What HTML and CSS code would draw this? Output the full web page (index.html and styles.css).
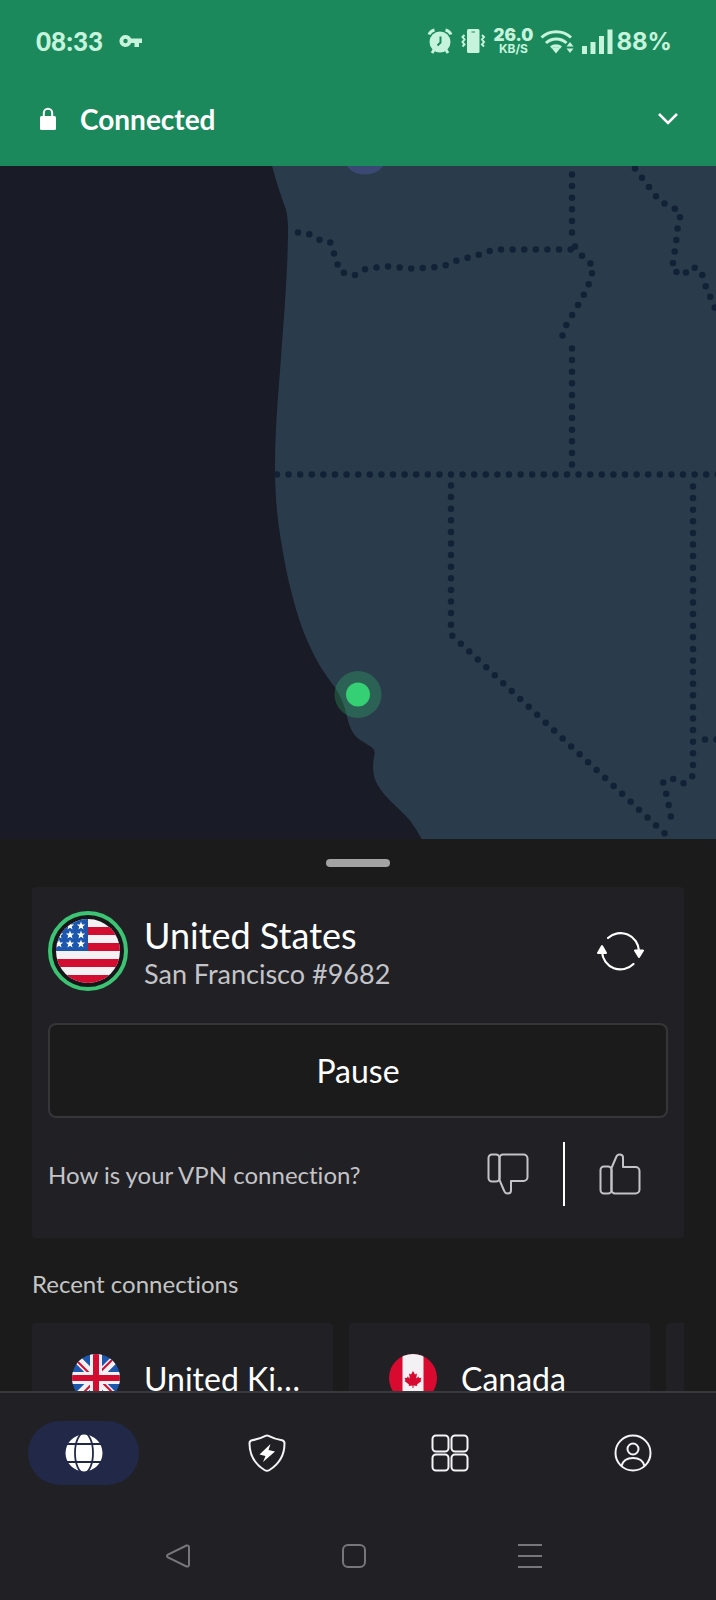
FILE: index.html
```html
<!DOCTYPE html>
<html lang="en">
<head>
  <meta charset="UTF-8">
  <meta name="viewport" content="width=device-width, initial-scale=1">
  <title>VPN - Connected</title>
  <link rel="stylesheet" href="styles.css">
</head>
<body>

  <div class="status-bar">
    <span class="clock">08:33</span>
    <svg class="key" width="24" height="14" viewBox="0 0 24 14">
      <path fill-rule="evenodd" d="M6.500 1a6 6 0 1 0 5.600 8H15.500v4h4.500v-4h3V4.500H12.100A6 6 0 0 0 6.500 1zm0 3.800a2.200 2.200 0 1 1 0 4.400 2.200 2.200 0 0 1 0-4.400z"/>
    </svg>

    <div class="status-icons">
      <svg width="26" height="26" viewBox="0 0 26 26">
        <circle cx="13" cy="14" r="10.500"/>
        <path class="line" d="M2 6.500Q3.500 3 7.500 2M24 6.500Q22.500 3 18.500 2M7 22l-2 3M19 22l2 3"/>
        <path class="cut" d="M13.500 8.500v6l-3 3"/>
      </svg>
      <svg width="26" height="26" viewBox="0 0 26 26">
        <rect x="7" y="1" width="12.500" height="24" rx="1.500"/>
        <path class="thin" d="M4.500 7l-2 2 2 2.500-2 2.500 2 2.500-2 2M22 7l2 2-2 2.500 2 2.500-2 2.500 2 2"/>
        <path class="cut thin-cut" d="M11.500 4h3.500"/>
      </svg>
      <div class="speed"><b>26.0</b><span>KB/S</span></div>
      <svg width="34" height="26" viewBox="0 0 34 26">
        <path class="arc" d="M1.500 9.500a21.500 21.500 0 0 1 29.500 0M6 15a15 15 0 0 1 20.500 0M11 19.500a8 8 0 0 1 10 0"/>
        <path d="M12 20.500q4-3 8 0l-4 5zM30 14l3.500 4.500h-7zM30 25l3.500-4.500h-7z"/>
      </svg>
      <svg width="32" height="26" viewBox="0 0 32 26">
        <path d="M1 18h5v8H1zM9.500 14h5v12h-5zM18 8h5v18h-5zM26.500 1.500h5V26h-5z"/>
      </svg>
      <span class="battery">88%</span>
    </div>
  </div>

  <button class="connection-bar">
    <svg width="16" height="24" viewBox="0 0 16 24">
      <rect x="0" y="9" width="16" height="14" rx="1.500" fill="#fff"/>
      <path d="M3.800 10V6a4.200 4.200 0 0 1 8.400 0v4" fill="none" stroke="#fff" stroke-width="2"/>
    </svg>
    <span>Connected</span>
    <svg class="chevron" width="20" height="12" viewBox="0 0 20 12">
      <path d="M1 1l9 9 9-9" fill="none" stroke="#fff" stroke-width="2.500"/>
    </svg>
  </button>

  <div class="map">
    <svg viewBox="0 166 716 674" preserveAspectRatio="xMidYMid slice">
      <path class="land" d="M272 166Q277 186 286 210Q288 218 288 230C288 262 285 306 282 343C280 378 275 420 275 468C275 500 278 525 282 547C288 584 298 622 310 647C318 665 326 676 335 688Q344 702 347 717Q350 732 358 739L372 748Q376 751 374 757Q371 775 378 786C386 800 400 809 410 821Q416 829 422 840H716V166z"/>
      <ellipse class="lake" cx="365" cy="162" rx="19" ry="13"/>

      <!-- state borders -->
      <g class="borders" stroke-width="6.500" stroke-dasharray="0 11.600">
        <path d="M298 233L308 234L318 240L330 242L340 272L354 276L364 270L376 268L389 267L412 269L433 268L443 267L454 262L480 255L494 250H573"/>
        <path d="M572 175V240"/>
        <path d="M575 247L584 259L594 267L588 287L583 297L563 331L562 342"/>
        <path d="M572 349V470"/>
        <path d="M277 475H720"/>
        <path d="M451 486V635L669 838"/>
        <path d="M693 487V776L684 784L675 779L663 782L667 797L672 823"/>
        <path d="M705 740H720"/>
        <path d="M635 169L660 202L673 208L681 214L678 225L676 243L672 270L683 276L692 267L701 271L705 285L716 311"/>
      </g>

      <circle class="pin-halo" cx="358" cy="695" r="23.500"/>
      <circle class="pin" cx="358" cy="695" r="12"/>
    </svg>
  </div>

  <main class="sheet">
    <div class="handle"></div>

    <section class="card">
      <div class="server">
        <div class="flag-ring">
          <svg width="64" height="64" viewBox="0 0 64 64">
            <clipPath id="us"><circle cx="32" cy="32" r="32"/></clipPath>
            <g clip-path="url(#us)">
              <rect width="64" height="64" fill="#f3f1f4"/>
              <path fill="#d30d30" d="M0 8h64v8H0zM0 24h64v8H0zM0 40h64v8H0zM0 56h64v8H0z"/>
              <rect width="32" height="32" fill="#1c57ad"/>
              <g fill="#fff">
                <path id="star" d="M25 2.500l1.100 2.900 3.100.1-2.500 1.900.9 3L25 8.700l-2.600 1.700.9-3-2.500-1.900 3.100-.1z"/>
                <use href="#star" x="-11"/>
                <use href="#star" y="9"/>
                <use href="#star" x="-11" y="9"/>
                <use href="#star" x="-22" y="9"/>
                <use href="#star" y="18"/>
                <use href="#star" x="-11" y="18"/>
                <use href="#star" x="-22" y="18"/>
              </g>
            </g>
          </svg>
        </div>
        <div class="server-name">
          <h1>United States</h1>
          <p>San Francisco #9682</p>
        </div>
        <button class="icon-button refresh" aria-label="Reconnect">
          <svg width="48" height="44" viewBox="0 0 48 44">
            <g fill="none" stroke="#fff" stroke-width="2.200" stroke-linecap="round">
              <path d="M12 9a18.500 18.500 0 0 1 31 13"/>
              <path d="M6 23a18.500 18.500 0 0 0 31.500 12"/>
            </g>
            <path fill="#fff" stroke="#fff" stroke-width="2" stroke-linejoin="round" d="M2 24l4-7 4 7zM39 21.500l4 6.500 4-6.500z"/>
          </svg>
        </button>
      </div>

      <button class="pause">Pause</button>

      <div class="feedback">
        <p>How is your VPN connection?</p>
        <button class="icon-button" aria-label="Bad connection">
          <svg class="thumb" width="42" height="42" viewBox="0 0 42 42">
            <rect x="1.500" y="1.500" width="11" height="27" rx="3.500"/>
            <path d="M12.500 5a3.500 3.500 0 0 1 3.500-3.500h20.500a4 4 0 0 1 4 4V24a4 4 0 0 1-4 4H24v9.500q0 3-3.500 3-2.500 0-3.500-3L12.500 27z"/>
          </svg>
        </button>
        <div class="divider"></div>
        <button class="icon-button" aria-label="Good connection">
          <svg class="thumb" width="42" height="42" viewBox="0 0 42 42">
            <rect x="1.500" y="13.500" width="11" height="27" rx="3.500"/>
            <path d="M12.500 37a3.500 3.500 0 0 0 3.500 3.500h20.500a4 4 0 0 0 4-4V18a4 4 0 0 0-4-4H24V4.500q0-3-3.500-3-2.500 0-3.500 3L12.500 15z"/>
          </svg>
        </button>
      </div>
    </section>

    <h2>Recent connections</h2>
    <div class="recent">
      <button class="recent-card">
        <svg width="48" height="48" viewBox="0 0 48 48">
          <clipPath id="uk"><circle cx="24" cy="24" r="24"/></clipPath>
          <g clip-path="url(#uk)">
            <rect width="48" height="48" fill="#1c57ad"/>
            <path stroke="#f3f1f4" stroke-width="8" d="M2 2l44 44M46 2L2 46"/>
            <path stroke="#d30d30" stroke-width="2" d="M4 6l16 16M42 4L26 20M6 44l16-16M44 42L28 26"/>
            <path stroke="#f3f1f4" stroke-width="12" d="M24 0v48M0 24h48"/>
            <path stroke="#d30d30" stroke-width="6" d="M24 0v48M0 24h48"/>
          </g>
        </svg>
        <span>United Kingdom</span>
      </button>
      <button class="recent-card">
        <svg width="48" height="48" viewBox="0 0 48 48">
          <clipPath id="ca"><circle cx="24" cy="24" r="24"/></clipPath>
          <g clip-path="url(#ca)">
            <rect width="48" height="48" fill="#d80a30"/>
            <rect x="13.500" width="21" height="48" fill="#f3f1f4"/>
            <path fill="#d80a30" d="M24 17l2 3.500 2-1-.8 5 2.300-2 .5 1.500 2.500-.3-1 2.500 1 .8-4.500 3.500.3 1.500-3.800-.6V34h-1v-2.600l-3.800.6.300-1.500-4.500-3.500 1-.8-1-2.500 2.500.3.500-1.500 2.300 2-.8-5 2 1z"/>
          </g>
        </svg>
        <span>Canada</span>
      </button>
      <button class="recent-card" aria-label="More"></button>
    </div>
  </main>

  <nav class="tabs">
    <a class="tab active" href="#" aria-label="Map">
      <svg width="38" height="38" viewBox="0 0 38 38">
        <circle cx="19" cy="19" r="18.500" fill="#fff"/>
        <g fill="none" stroke="#222948" stroke-width="1.800">
          <ellipse cx="19" cy="19" rx="9" ry="20"/>
          <path d="M0 10h38M0 28h38"/>
        </g>
      </svg>
    </a>
    <a class="tab" href="#" aria-label="Threat protection">
      <svg width="38" height="38" viewBox="0 0 38 38">
        <path class="outline" d="M17.500 1.800Q19 1 20.500 1.800C25 4.200 29 5.300 34 6.300Q36.500 6.800 36.500 9.500C36.500 21 31 30 21.500 36Q19 37.500 16.500 36C7 30 1.500 21 1.500 9.500Q1.500 6.800 4 6.300C9 5.300 13 4.200 17.500 1.800z"/>
        <path fill="#fff" d="M22.500 10L11.500 20.500l6 1.500-2.500 6L27 17.500l-6.500-1.500z"/>
      </svg>
    </a>
    <a class="tab" href="#" aria-label="Products">
      <svg width="38" height="38" viewBox="0 0 38 38">
        <g class="outline">
          <rect x="1.500" y="1.500" width="16" height="16" rx="3.500"/>
          <rect x="20.500" y="1.500" width="16" height="16" rx="3.500"/>
          <rect x="1.500" y="20.500" width="16" height="16" rx="3.500"/>
          <rect x="20.500" y="20.500" width="16" height="16" rx="3.500"/>
        </g>
      </svg>
    </a>
    <a class="tab" href="#" aria-label="Profile">
      <svg width="38" height="38" viewBox="0 0 38 38">
        <g class="outline">
          <circle cx="19" cy="19" r="17.500"/>
          <circle cx="19" cy="15" r="5.500"/>
          <path d="M7.500 32C9 26 13 24 19 24s10 2 11.500 8"/>
        </g>
      </svg>
    </a>
  </nav>

  <div class="system-nav">
    <button aria-label="Back">
      <svg width="24" height="24" viewBox="0 0 24 24"><path d="M20.500 1.500L2 10.500q-2 1.500 0 3L20.500 22.500q2.500.5 2.500-2V3.500q0-2.500-2.500-2z"/></svg>
    </button>
    <button aria-label="Home">
      <svg width="24" height="24" viewBox="0 0 24 24"><rect x="1" y="1" width="22" height="22" rx="5"/></svg>
    </button>
    <button aria-label="Recent apps">
      <svg width="24" height="24" viewBox="0 0 24 24"><path d="M0 1h24M0 12h24M0 23h24"/></svg>
    </button>
  </div>

</body>
</html>
```

FILE: styles.css
```css
* {
  box-sizing: border-box;
}

body {
  margin: 0;
  min-height: 100vh;
  display: flex;
  flex-direction: column;
  font-family: Lato, sans-serif;
  font-variant-ligatures: none;
  background: #1b1b1b;
  color: #fff;
}

svg {
  display: block;
  flex: none;
}

h1, h2, p {
  margin: 0;
  font-weight: 400;
}

button {
  border: none;
  padding: 0;
  background: none;
  color: inherit;
  font: inherit;
  cursor: pointer;
}

/* status bar */
.status-bar {
  display: flex;
  align-items: center;
  height: 82px;
  padding: 0 44px 0 36px;
  background: #1b895b;
  color: #c6f3dc;
}

.status-bar svg {
  fill: #c6f3dc;
}

.clock {
  font-size: 26px;
  font-weight: 900;
}

.status-bar .key {
  margin-left: 16px;
}

.status-icons {
  display: flex;
  align-items: center;
  gap: 7px;
  margin-left: auto;
  font-family: Inter, sans-serif;
}

.status-bar .line,
.status-bar .thin,
.status-bar .arc {
  fill: none;
  stroke: #c6f3dc;
  stroke-width: 3;
}

.status-bar .thin {
  stroke-width: 2;
}

.status-bar .cut {
  fill: none;
  stroke: #1b895b;
  stroke-width: 2;
}

.status-bar .thin-cut {
  stroke-width: 1;
}

.speed {
  display: flex;
  flex-direction: column;
  align-items: center;
  font-size: 12px;
  font-weight: 700;
  line-height: 12px;
}

.speed b {
  font-size: 17px;
  line-height: 15px;
}

.battery {
  margin-left: -4px;
  font-size: 24px;
  font-weight: 700;
}

.connection-bar {
  display: flex;
  align-items: center;
  height: 84px;
  padding: 0 38px 10px 40px;
  background: #1b895b;
  font-size: 28px;
  font-weight: 700;
}

.connection-bar span {
  margin-left: 24px;
}

.chevron {
  margin-left: auto;
}

/* map */
.map {
  flex: 1;
  min-height: 320px;
  position: relative;
  background: #191b26;
}

.map svg {
  position: absolute;
  width: 100%;
  height: 100%;
}

.land {
  fill: #2a3c4b;
}

.lake {
  fill: #3a4874;
}

.borders {
  fill: none;
  stroke: #132136;
  stroke-linecap: round;
}

.pin {
  fill: #35d073;
}

.pin-halo {
  fill: #35d073;
  opacity: 0.25;
}

/* bottom sheet */
.sheet {
  padding: 20px 32px 0;
}

.handle {
  width: 64px;
  height: 8px;
  margin: 0 auto 20px;
  border-radius: 4px;
  background: #a3a3a3;
}

.card {
  padding: 24px 16px 32px;
  border-radius: 4px;
  background: #202025;
}

.server {
  display: flex;
  align-items: center;
  height: 80px;
}

.flag-ring {
  padding: 4px;
  border: 4px solid #3cc474;
  border-radius: 50%;
  background: #17171a;
}

.server-name {
  flex: 1;
  margin-left: 16px;
  padding-top: 4px;
}

.server-name h1 {
  font-size: 36px;
  line-height: 42px;
}

.server-name p {
  color: #c4c4c8;
  font-size: 27px;
  line-height: 36px;
}

.refresh {
  margin-right: 24px;
}

.pause {
  display: block;
  width: 100%;
  height: 95px;
  margin: 32px 0 24px;
  border: 2px solid #363639;
  border-radius: 8px;
  background: #1b1b1b;
  font-size: 32px;
}

.feedback {
  display: flex;
  align-items: center;
  padding-right: 27px;
}

.feedback p {
  flex: 1;
  color: #c4c4c8;
  font-size: 24px;
}

.thumb {
  fill: none;
  stroke: #c4c4c8;
  stroke-width: 2;
  stroke-linejoin: round;
}

.divider {
  width: 2px;
  height: 64px;
  margin: 0 34px;
  background: #fff;
}

.sheet h2 {
  margin: 30px 0 23px;
  color: #c4c4c4;
  font-size: 24px;
  line-height: 32px;
}

.recent {
  display: flex;
  gap: 16px;
  height: 68px;
  overflow: hidden;
}

.recent-card {
  display: flex;
  flex: none;
  align-items: center;
  width: 301px;
  height: 110px;
  padding: 0 32px 0 40px;
  border-radius: 4px;
  background: #202025;
  font-size: 32px;
}

.recent-card span {
  margin-left: 24px;
  overflow: hidden;
  text-overflow: ellipsis;
  white-space: nowrap;
}

/* tabs */
.tabs {
  display: flex;
  justify-content: space-between;
  padding: 28px;
  border-top: 2px solid #39393d;
  background: #202025;
}

.tab {
  display: flex;
  align-items: center;
  justify-content: center;
  width: 111px;
  height: 64px;
  border-radius: 32px;
}

.tab.active {
  background: #222948;
}

.outline {
  fill: none;
  stroke: #f4f4f6;
  stroke-width: 2;
}

.system-nav {
  display: flex;
  justify-content: center;
  gap: 152px;
  padding: 31px 8px 32px 0;
  background: #202025;
}

.system-nav svg {
  fill: none;
  stroke: #77777b;
  stroke-width: 2;
}
```
